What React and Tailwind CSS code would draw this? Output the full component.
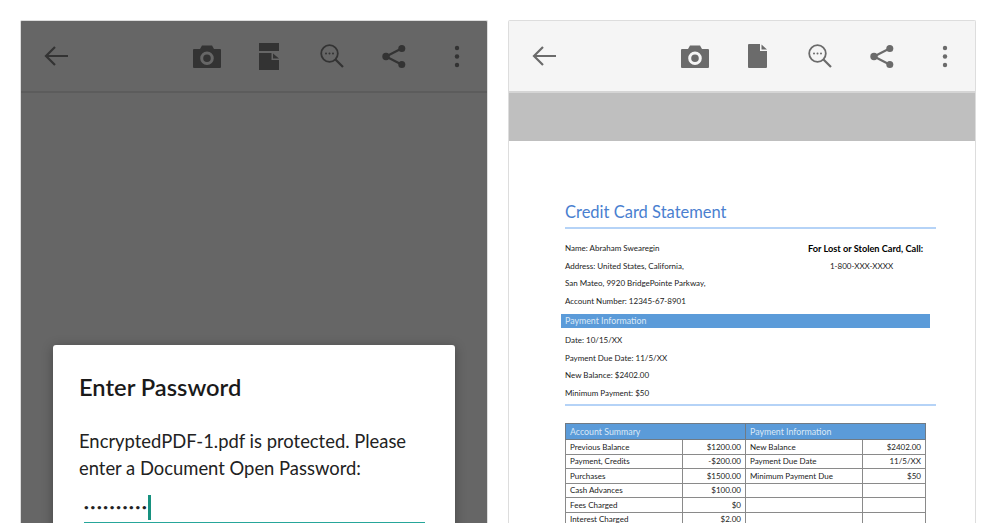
const rows = [
	["Previous Balance", "$1200.00", "New Balance", "$2402.00"],
	["Payment, Credits", "-$200.00", "Payment Due Date", "11/5/XX"],
	["Purchases", "$1500.00", "Minimum Payment Due", "$50"],
	["Cash Advances", "$100.00", "", ""],
	["Fees Charged", "$0", "", ""],
	["Interest Charged", "$2.00", "", ""],
]

function BackIcon() {
	return (
		<svg width="24" height="24" viewBox="0 0 24 24" fill="none" stroke="currentColor" strokeWidth="2.2">
			<path d="M24 12H2M11 3L2 12L11 21" />
		</svg>
	)
}

function CameraIcon() {
	return (
		<svg width="28" height="23" viewBox="0 0 28 23">
			<path fill="currentColor" fillRule="evenodd" d="M1 4h6l2-3.500h10l2 3.500h6a1 1 0 0 1 1 1v17a1 1 0 0 1-1 1H1a1 1 0 0 1-1-1V5a1 1 0 0 1 1-1zM14 6.500a6.800 6.800 0 1 0 0 13.600a6.800 6.800 0 0 0 0-13.600zM14 9.500a3.800 3.800 0 1 1 0 7.600a3.800 3.800 0 0 1 0-7.600z" />
		</svg>
	)
}

function PageIcon() {
	return (
		<svg width="19" height="24" viewBox="0 0 19 24">
			<path fill="currentColor" d="M1 0h11v7h7v16a1 1 0 0 1-1 1H1a1 1 0 0 1-1-1V1a1 1 0 0 1 1-1zM13.500 0.500L19 5.500h-5.500z" />
		</svg>
	)
}

function SplitPageIcon() {
	return (
		<svg width="20" height="27" viewBox="0 0 20 27">
			<path fill="currentColor" d="M0 0h20v8H0zM0 10h12.500v7H20v10H0zM14 10.500l6 5h-6z" />
		</svg>
	)
}

function SearchIcon() {
	return (
		<svg width="24" height="24" viewBox="0 0 24 24" fill="none" stroke="currentColor">
			<circle cx="9.500" cy="9.500" r="8.300" strokeWidth="1.800" />
			<path d="M15.500 15.500L23 23" strokeWidth="2.200" />
			<circle cx="6" cy="9.500" r="1" fill="currentColor" stroke="none" />
			<circle cx="9.500" cy="9.500" r="1" fill="currentColor" stroke="none" />
			<circle cx="13" cy="9.500" r="1" fill="currentColor" stroke="none" />
		</svg>
	)
}

function ShareIcon() {
	return (
		<svg width="24" height="23" viewBox="0 0 24 23" fill="currentColor">
			<path d="M19.500 3.500L4 11.500L19.500 19.500" fill="none" stroke="currentColor" strokeWidth="2.200" />
			<circle cx="19.800" cy="3.500" r="3.500" />
			<circle cx="4" cy="11.500" r="3.700" />
			<circle cx="19.800" cy="19.500" r="3.500" />
		</svg>
	)
}

function DotsIcon() {
	return (
		<svg width="6" height="23" viewBox="0 0 6 23" fill="currentColor">
			<circle cx="3" cy="3" r="2.200" />
			<circle cx="3" cy="11.500" r="2.200" />
			<circle cx="3" cy="20" r="2.200" />
		</svg>
	)
}

function Toolbar({ className, docIcon }) {
	const slot = "w-[62.500px] flex items-center justify-center"
	return (
		<div className={`h-[72px] flex items-center pl-[23px] ${className}`}>
			<BackIcon />
			<div className="ml-auto -mr-px flex items-center">
				<div className={slot}><CameraIcon /></div>
				<div className={slot}>{docIcon}</div>
				<div className={slot}><SearchIcon /></div>
				<div className={slot}><ShareIcon /></div>
				<div className={slot}><DotsIcon /></div>
			</div>
		</div>
	)
}

function InfoLine({ children }) {
	return <div className="h-[17.500px] leading-[17.500px]">{children}</div>
}

function Statement() {
	return (
		<div className="pt-[60px] pl-[56px] text-[8px] text-[#222] font-['Lato',sans-serif]">
			<div className="w-[371px] h-[28px] border-b-2 border-[#b5d3f7] text-[#4a7fd0] text-[16.500px] leading-[22px]">
				Credit Card Statement
			</div>
			<div className="w-[359px] flex justify-between mt-[11px]">
				<div>
					<InfoLine>Name: Abraham Swearegin</InfoLine>
					<InfoLine>Address: United States, California,</InfoLine>
					<InfoLine>San Mateo, 9920 BridgePointe Parkway,</InfoLine>
					<InfoLine>Account Number: 12345-67-8901</InfoLine>
				</div>
				<div className="w-[117px] text-center">
					<InfoLine><span className="text-[9.200px] font-bold text-black whitespace-nowrap">For Lost or Stolen Card, Call:</span></InfoLine>
					<div className="pr-2"><InfoLine>1-800-XXX-XXXX</InfoLine></div>
				</div>
			</div>
			<div className="w-[369px] h-[14px] -ml-1 mt-[4px] pl-1 bg-[#5b9bd9] text-[8.800px] text-[#dbe9f7] leading-[14px]">
				Payment Information
			</div>
			<div className="mt-[4px]">
				<InfoLine>Date: 10/15/XX</InfoLine>
				<InfoLine>Payment Due Date: 11/5/XX</InfoLine>
				<InfoLine>New Balance: $2402.00</InfoLine>
				<InfoLine>Minimum Payment: $50</InfoLine>
			</div>
			<div className="w-[371px] mt-[2px] border-b-2 border-[#b5d3f7]"></div>
			<table className="w-[360px] mt-[17px] table-fixed border-collapse">
				<colgroup>
					<col className="w-[117px]" />
					<col className="w-[63px]" />
					<col className="w-[117px]" />
					<col className="w-[63px]" />
				</colgroup>
				<thead>
					<tr className="h-[16px] bg-[#5b9bd9] text-[8.800px] text-[#dbe9f7]">
						<th colSpan="2" className="border border-[#707a84] px-1 font-normal text-left">Account Summary</th>
						<th colSpan="2" className="border border-[#707a84] px-1 font-normal text-left">Payment Information</th>
					</tr>
				</thead>
				<tbody>
					{rows.map((row) => (
						<tr key={row[0]} className="h-[14.500px] leading-none">
							<td className="border border-[#8a8a8a] px-1">{row[0]}</td>
							<td className="border border-[#8a8a8a] px-1 text-right">{row[1]}</td>
							<td className="border border-[#8a8a8a] px-1">{row[2]}</td>
							<td className="border border-[#8a8a8a] px-1 text-right">{row[3]}</td>
						</tr>
					))}
				</tbody>
			</table>
		</div>
	)
}

export default function App() {
	return (
		<div className="h-[523px] overflow-hidden bg-white flex gap-5 pl-5 pt-5 font-['Lato',sans-serif]">
			<div className="w-[468px] h-[560px] border border-b-0 border-[#ddd] rounded-t-[2px] bg-[#666]">
				<Toolbar className="text-[#333] border-b-2 border-[#5c5c5c]" docIcon={<SplitPageIcon />} />
				<div className="ml-[32px] mt-[252px] w-[402px] h-[200px] bg-white rounded-[3px] pt-[25px] pl-[26px] shadow-[0_2px_12px_rgba(0,0,0,0.3)]">
					<h2 className="text-[23.700px] leading-[34px] font-semibold text-[#1a1a1a]">Enter Password</h2>
					<p className="mt-[24px] text-[18.400px] leading-[27px] text-[#222]">
						EncryptedPDF-1.pdf is protected. Please
						<br />
						enter a Document Open Password:
					</p>
					<div className="mt-[10px] ml-[5px] w-[341px] h-[32px] border-b-2 border-[#26a69a] flex items-center">
						<span className="text-[8px] font-bold leading-none tracking-[1.800px] text-[#222]">••••••••••</span>
						<span className="w-[2.500px] h-[25px] bg-[#17917f]"></span>
					</div>
				</div>
			</div>
			<div className="w-[468px] h-[560px] border border-b-0 border-[#ddd] rounded-t-[2px] bg-white">
				<Toolbar className="bg-[#f5f5f5] text-[#6b6b6b] border-b-2 border-[#d5d5d5]" docIcon={<PageIcon />} />
				<div className="h-[48px] bg-[#bfbfbf]"></div>
				<Statement />
			</div>
		</div>
	)
}
